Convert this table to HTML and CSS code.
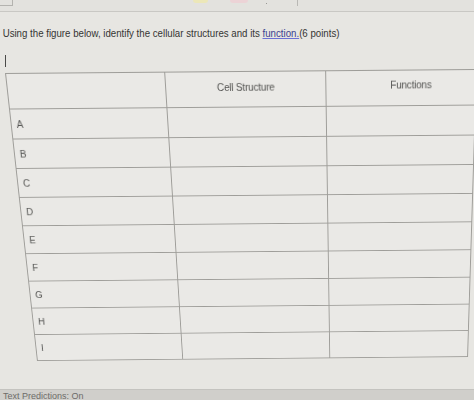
FILE: index.html
```html
<!DOCTYPE html>
<html lang="en">
<head>
<meta charset="utf-8">
<title>Cell structures</title>
<link rel="stylesheet" href="styles.css">
</head>
<body>
<div class="page">
  <div class="toolbar">
    <span class="tb-box"></span>
    <span class="tb-mark tb-yellow"></span>
    <span class="tb-mark tb-pink"></span>
    <span class="tb-dot"></span>
    <span class="tb-sep"></span>
  </div>
  <p class="question">Using the figure below, identify the cellular structures and its <span class="spell">function.</span>(6 points)</p>
  <div class="cursor"></div>
  <div class="table-wrap">
    <div class="grid">
      <div class="cell head"></div>
      <div class="cell head">Cell Structure</div>
      <div class="cell head fn">Functions</div>

      <div class="cell label">A</div><div class="cell"></div><div class="cell"></div>
      <div class="cell label">B</div><div class="cell"></div><div class="cell"></div>
      <div class="cell label">C</div><div class="cell"></div><div class="cell"></div>
      <div class="cell label">D</div><div class="cell"></div><div class="cell"></div>
      <div class="cell label">E</div><div class="cell"></div><div class="cell"></div>
      <div class="cell label">F</div><div class="cell"></div><div class="cell"></div>
      <div class="cell label">G</div><div class="cell"></div><div class="cell"></div>
      <div class="cell label">H</div><div class="cell"></div><div class="cell"></div>
      <div class="cell label">I</div><div class="cell"></div><div class="cell"></div>
    </div>
  </div>
</div>
<div class="status">Text Predictions: On</div>
</body>
</html>
```
FILE: styles.css
```css
html, body {
  margin: 0;
  padding: 0;
}

body {
  width: 474px;
  height: 400px;
  overflow: hidden;
  background: #e7e6e2;
  font-family: "Liberation Sans", Arial, sans-serif;
}

.page {
  height: 389px;
}

.toolbar {
  height: 11px;
  border-bottom: 1px solid #c9c8c4;
  background: #e3e2de;
  display: flex;
  align-items: flex-start;
}

.tb-box {
  width: 12px;
  height: 5px;
  border-right: 1px solid #b4b3af;
  border-bottom: 1px solid #b4b3af;
}

.tb-mark {
  height: 3px;
  width: 15px;
  border-radius: 0 0 3px 3px;
}

.tb-yellow {
  margin-left: 180px;
  background: #ece7b8;
}

.tb-pink {
  margin-left: 22px;
  width: 18px;
  background: #ecd3d6;
}

.tb-dot {
  margin-left: 18px;
  margin-top: 3px;
  width: 1px;
  height: 1px;
  background: #9a9995;
}

.tb-sep {
  margin-left: 30px;
  width: 1px;
  height: 6px;
  background: #b9b8b4;
}

.question {
  margin: 14px 0 0 0;
  padding-left: 3px;
  font-size: 11px;
  line-height: 14px;
  color: #353533;
  white-space: nowrap;
  transform: scaleX(0.88);
  transform-origin: 0 0;
}

.spell {
  color: #3b3e8e;
  text-decoration: underline;
  text-decoration-color: #6b70d4;
}

.cursor {
  margin: 15px 0 0 5px;
  width: 1px;
  height: 12px;
  background: #4a4a48;
}

.table-wrap {
  margin-top: 6px;
  height: 316px;
}

.grid {
  display: grid;
  grid-template-columns: 158px 160px 150px;
  grid-template-rows: 35px repeat(9, 30px);
  gap: 1px;
  padding: 1px;
  width: 472px;
  box-sizing: border-box;
  background: #9e9d99;
  transform-origin: 0 0;
  transform: matrix3d(1.001335, -0.0084858, 0, 0.0000028, 0.112408, 0.998117, 0, 0.00030112, 0, 0, 1, 0, 5, 0, 0, 1);
}

.cell {
  background: #eae9e6;
  display: flex;
  align-items: center;
  font-size: 10px;
  color: #555553;
}

.head {
  justify-content: center;
  letter-spacing: -0.2px;
  padding-bottom: 4px;
}

.head.fn {
  padding-left: 20px;
  padding-bottom: 7px;
}

.label {
  padding-left: 5px;
}

.status {
  height: 10px;
  background: #d0cfcb;
  border-top: 1px solid #c4c3bf;
  padding: 1px 0 0 3px;
  font-size: 9px;
  line-height: 10px;
  color: #6d6c69;
  overflow: hidden;
}
```
